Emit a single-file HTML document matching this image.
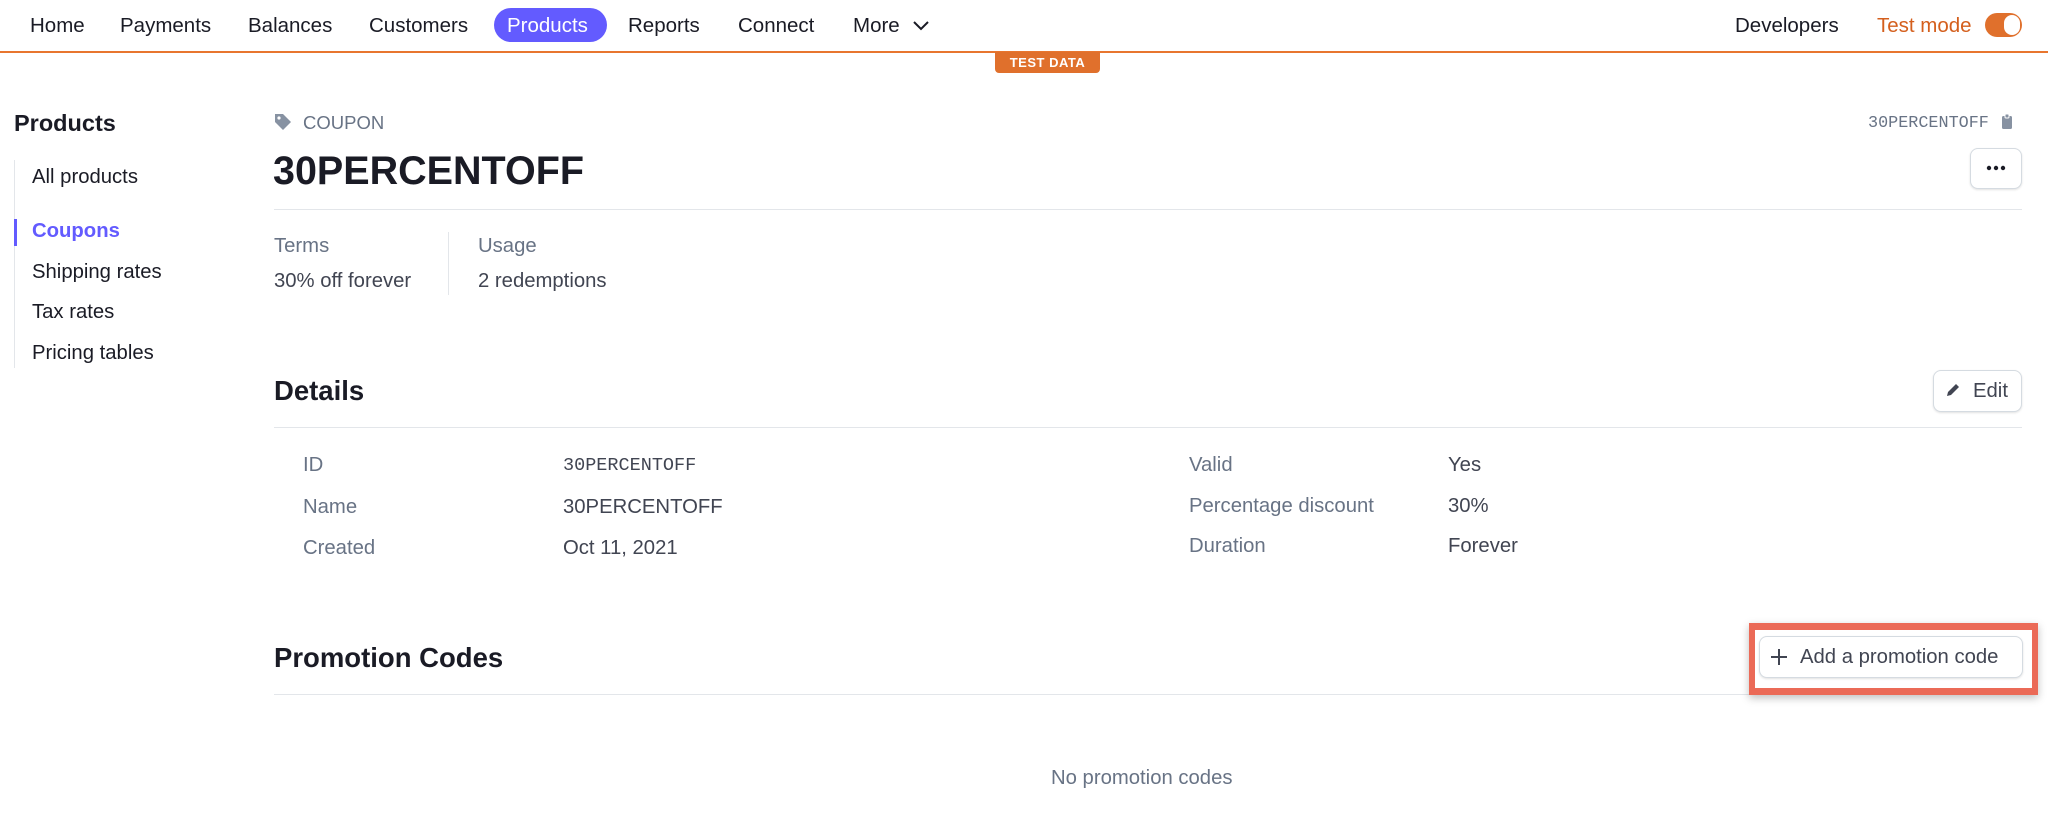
<!DOCTYPE html>
<html><head><meta charset="utf-8"><style>
*{margin:0;padding:0;box-sizing:border-box}
body{width:2048px;height:829px;background:#fff;font-family:"Liberation Sans",sans-serif;color:#1a1b25;position:relative;overflow:hidden}
.a{position:absolute;white-space:nowrap}
.nav{font-size:20.5px;top:14px;color:#1a1b25}
.g{color:#687385}
.s{font-size:20.3px}
.btn{position:absolute;border:1px solid #d5dbe1;border-radius:8px;background:#fff;box-shadow:0 1px 2px rgba(0,0,0,.12)}
.hr{position:absolute;left:274px;width:1748px;height:1px;background:#e3e6ea}
</style></head><body>
<div class="a nav" style="left:30px">Home</div>
<div class="a nav" style="left:120px">Payments</div>
<div class="a nav" style="left:248px">Balances</div>
<div class="a nav" style="left:369px">Customers</div>
<div class="a" style="left:494px;top:8px;width:113px;height:34px;border-radius:17px;background:#635bff"></div>
<div class="a nav" style="left:507px;color:#fff">Products</div>
<div class="a nav" style="left:628px">Reports</div>
<div class="a nav" style="left:738px">Connect</div>
<div class="a nav" style="left:853px">More</div>
<svg class="a" style="left:912px;top:19px" width="18" height="14"><path d="M2 3l7 7 7-7" stroke="#1a1b25" stroke-width="2" fill="none"/></svg>
<div class="a nav" style="left:1735px">Developers</div>
<div class="a nav" style="left:1877px;color:#d45f1d">Test mode</div>
<div class="a" style="left:1985px;top:13px;width:37px;height:24px;border-radius:12px;background:#e0702c"></div>
<div class="a" style="left:2004px;top:15px;width:16px;height:20px;border-radius:10px;background:#fff"></div>
<div class="a" style="left:0;top:51px;width:2048px;height:2px;background:#e8762f"></div>
<div class="a" style="left:995px;top:52px;width:105px;height:21px;background:#e0702c;border-radius:0 0 4px 4px;color:#fff;font-size:13px;font-weight:bold;text-align:center;line-height:21px;letter-spacing:.5px">TEST DATA</div>

<div class="a" style="left:14px;top:110px;font-size:23.5px;font-weight:bold">Products</div>
<div class="a" style="left:14px;top:160px;width:1px;height:208px;background:#e3e6ea"></div>
<div class="a" style="left:14px;top:219px;width:3px;height:27px;background:#635bff"></div>
<div class="a s" style="left:32px;top:166px">All products</div>
<div class="a s" style="left:32px;top:220px;color:#635bff;font-weight:bold">Coupons</div>
<div class="a s" style="left:32px;top:261px">Shipping rates</div>
<div class="a s" style="left:32px;top:301px">Tax rates</div>
<div class="a s" style="left:32px;top:342px">Pricing tables</div>

<svg class="a" style="left:274px;top:113px" width="18" height="18" viewBox="0 0 18 18"><path d="M1 1h8l8 8-8 8-8-8z" fill="#8792a2"/><circle cx="5" cy="5" r="1.6" fill="#fff"/></svg>
<div class="a g" style="left:303px;top:112px;font-size:18.5px">COUPON</div>
<div class="a" style="left:273px;top:149px;font-size:39.5px;font-weight:bold">30PERCENTOFF</div>
<div class="a g" style="left:1868px;top:114px;font-size:16.8px;font-family:'Liberation Mono',monospace">30PERCENTOFF</div>
<svg class="a" style="left:2001px;top:113px" width="12" height="17"><rect x="1" y="3" width="10" height="13" rx="1.5" fill="#8792a2"/><rect x="4" y="1" width="4" height="4" rx="1" fill="#8792a2" stroke="#fff"/></svg>
<div class="btn" style="left:1970px;top:148px;width:52px;height:41px"></div>
<svg class="a" style="left:1986px;top:165px" width="20" height="6"><circle cx="3" cy="3" r="2.2" fill="#1a1b25"/><circle cx="10" cy="3" r="2.2" fill="#1a1b25"/><circle cx="17" cy="3" r="2.2" fill="#1a1b25"/></svg>
<div class="hr" style="top:209px"></div>

<div class="a g s" style="left:274px;top:235px">Terms</div>
<div class="a s" style="left:274px;top:270px;color:#414552">30% off forever</div>
<div class="a" style="left:448px;top:232px;width:1px;height:63px;background:#e3e6ea"></div>
<div class="a g s" style="left:478px;top:235px">Usage</div>
<div class="a s" style="left:478px;top:270px;color:#414552">2 redemptions</div>

<div class="a" style="left:274px;top:375px;font-size:27.5px;font-weight:bold">Details</div>
<div class="btn" style="left:1933px;top:370px;width:89px;height:42px"></div>
<svg class="a" style="left:1945px;top:382px" width="16" height="16"><path d="M2 14l1-4 8-8 3 3-8 8z" fill="#414552"/></svg>
<div class="a s" style="left:1973px;top:380px;color:#414552">Edit</div>
<div class="hr" style="top:427px"></div>

<div class="a g s" style="left:303px;top:454px">ID</div>
<div class="a" style="left:563px;top:455px;font-family:'Liberation Mono',monospace;font-size:18.5px;color:#414552">30PERCENTOFF</div>
<div class="a g s" style="left:303px;top:496px">Name</div>
<div class="a s" style="left:563px;top:496px;color:#414552">30PERCENTOFF</div>
<div class="a g s" style="left:303px;top:537px">Created</div>
<div class="a s" style="left:563px;top:537px;color:#414552">Oct 11, 2021</div>
<div class="a g s" style="left:1189px;top:454px">Valid</div>
<div class="a s" style="left:1448px;top:454px;color:#414552">Yes</div>
<div class="a g s" style="left:1189px;top:495px">Percentage discount</div>
<div class="a s" style="left:1448px;top:495px;color:#414552">30%</div>
<div class="a g s" style="left:1189px;top:535px">Duration</div>
<div class="a s" style="left:1448px;top:535px;color:#414552">Forever</div>

<div class="a" style="left:274px;top:642px;font-size:27.5px;font-weight:bold">Promotion Codes</div>
<div class="hr" style="top:694px"></div>
<div class="a" style="left:1749px;top:623px;width:289px;height:72px;background:#eb6a57;box-shadow:0 3px 8px rgba(0,0,0,.25)"></div>
<div class="a" style="left:1755px;top:630px;width:277px;height:58px;background:#fff"></div>
<div class="btn" style="left:1759px;top:636px;width:264px;height:42px"></div>
<svg class="a" style="left:1770px;top:648px" width="18" height="18"><path d="M9 1v16M1 9h16" stroke="#414552" stroke-width="2"/></svg>
<div class="a s" style="left:1800px;top:646px;color:#414552">Add a promotion code</div>
<div class="a g s" style="left:1051px;top:767px">No promotion codes</div>
</body></html>
